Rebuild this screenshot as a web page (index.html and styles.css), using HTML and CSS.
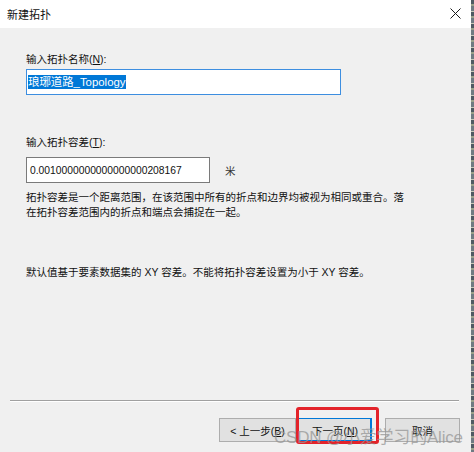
FILE: index.html
```html
<!DOCTYPE html>
<html lang="zh-CN">

<head>
  <meta charset="UTF-8" />
  <meta name="viewport" content="width=device-width, initial-scale=1.0" />
  <title>新建拓扑</title>
  <link rel="stylesheet" href="styles.css">
</head>

<body>
  <div class="screen">
    <div class="dialog">
      <div class="titlebar">
        <span class="title">新建拓扑</span>
        <svg class="close" width="11" height="11" viewBox="0 0 11 11">
          <path d="M0.5 0.5 L10.5 10.5 M10.5 0.5 L0.5 10.5" stroke="#1a1a1a" stroke-width="1" fill="none" />
        </svg>
      </div>

      <div class="content">
        <div class="label label-name">输入拓扑名称(<u>N</u>):</div>
        <div class="field field-name"><span class="selected">琅琊道路_Topology</span></div>

        <div class="label label-tol">输入拓扑容差(<u>T</u>):</div>
        <div class="tol-row">
          <div class="field field-tol">0.0010000000000000000208167</div>
          <span class="unit">米</span>
        </div>

        <p class="note">拓扑容差是一个距离范围，在该范围中所有的折点和边界均被视为相同或重合。落<br>在拓扑容差范围内的折点和端点会捕捉在一起。</p>

        <p class="note note-xy">默认值基于要素数据集的 XY 容差。不能将拓扑容差设置为小于 XY 容差。</p>
      </div>

      <div class="footer">
        <div class="separator"></div>
        <div class="buttons">
          <button class="button back">&lt; 上一步(<u>B</u>)</button>
          <button class="button next default">下一页(<u>N</u>)</button>
          <button class="button cancel">取消</button>
          <div class="highlight"></div>
          <div class="watermark">CSDN @小爱学习的Alice</div>
        </div>
      </div>
    </div>
    <div class="edge"></div>
  </div>
</body>

</html>
```

FILE: styles.css
```css
body {
  margin: 0;
  font-family: "Liberation Sans", "Noto Sans CJK SC", sans-serif;
  color: #111;
}

.screen {
  width: 474px;
  height: 452px;
  display: flex;
  overflow: hidden;
}

.dialog {
  flex: 1;
  display: flex;
  flex-direction: column;
  background: #f0f0f0;
}

.edge {
  width: 3px;
  background: repeating-linear-gradient(#4f5a63 0 4px, #9aa08a 4px 6px, #6f7a82 6px 11px, #c8c8b8 11px 12px);
}

.titlebar {
  height: 27px;
  background: #fff;
  display: flex;
  align-items: center;
  justify-content: space-between;
  padding: 0 10px 1px 7px;
}

.title {
  font-size: 11px;
}

.content {
  flex: 1;
  padding: 24px 0 0 26px;
}

.label {
  font-size: 10.5px;
  line-height: 14px;
}

.label-tol {
  margin-top: 40px;
}

.field {
  box-sizing: border-box;
  height: 26px;
  background: #fff;
  border: 1px solid #7a7a7a;
  font-size: 10.3px;
  display: flex;
  align-items: center;
  padding-left: 3px;
}

.field-name {
  width: 315px;
  margin-top: 3px;
  border-color: #3d8ee0;
  padding-left: 1px;
  font-size: 11.4px;
}

.selected {
  background: #0078d7;
  color: #fff;
  line-height: 14px;
}

.tol-row {
  display: flex;
  align-items: center;
  gap: 15px;
  margin-top: 8px;
}

.field-tol {
  width: 184px;
}

.unit {
  font-size: 10.5px;
  color: #333;
}

.note {
  margin: 7px 0 0;
  font-size: 10.5px;
  line-height: 15px;
}

.note-xy {
  margin-top: 45px;
}

.footer {
  padding-bottom: 10px;
}

.separator {
  height: 1px;
  background: #a0a0a0;
  border-bottom: 1px solid #fff;
  margin: 0 12px 0 10px;
}

.buttons {
  position: relative;
  display: flex;
  justify-content: flex-end;
  margin-top: 16px;
  padding-right: 11px;
}

.button {
  box-sizing: border-box;
  height: 24px;
  width: 75px;
  background: #e1e1e1;
  border: 1px solid #adadad;
  font-family: inherit;
  font-size: 10.5px;
  color: #111;
  padding: 0;
}

.button.back {
  width: 77px;
}

.button.next {
  width: 74px;
  margin-left: 2px;
  border: 1px solid #0078d7;
  box-shadow: inset -1px -1px 0 #0078d7;
}

.button.cancel {
  margin-left: 13px;
}

.highlight {
  position: absolute;
  left: 296px;
  top: -11px;
  width: 83px;
  height: 37px;
  box-sizing: border-box;
  border: 3px solid #e3232a;
  border-radius: 3px;
}

.watermark {
  position: absolute;
  left: 274px;
  top: 5px;
  font-size: 17px;
  color: rgba(150, 150, 150, 0.75);
  white-space: nowrap;
  letter-spacing: -0.2px;
}
```
